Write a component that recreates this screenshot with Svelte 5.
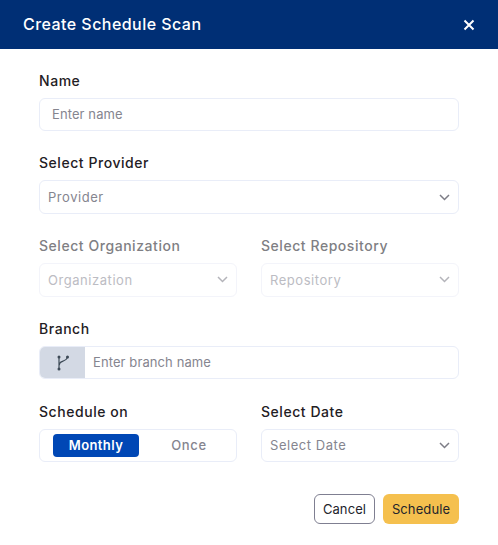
<script>
    let schedule = $state('Monthly');
</script>

<div class="modal">
    <header>
        <h1>Create Schedule Scan</h1>
        <svg class="close" width="12" height="12" viewBox="0 0 12 12"><path d="M1.5 1.5l9 9M10.5 1.5l-9 9" /></svg>
    </header>
    <main>
        <div class="field">
            <span class="label">Name</span>
            <div class="box input-box"><span class="ph">Enter name</span></div>
        </div>
        <div class="field">
            <span class="label">Select Provider</span>
            <div class="box select"><span class="ph">Provider</span>{@render chevron()}</div>
        </div>
        <div class="two disabled">
            <div class="field">
                <span class="label">Select Organization</span>
                <div class="box select"><span class="ph">Organization</span>{@render chevron()}</div>
            </div>
            <div class="field">
                <span class="label">Select Repository</span>
                <div class="box select"><span class="ph">Repository</span>{@render chevron()}</div>
            </div>
        </div>
        <div class="field">
            <span class="label">Branch</span>
            <div class="box branch">
                <div class="addon">
                    <svg width="12" height="16" viewBox="0 0 12 16">
                        <circle cx="2" cy="2" r="1.500" />
                        <circle cx="2" cy="14" r="1.500" />
                        <circle cx="10.500" cy="2" r="1.500" />
                        <path d="M2 2v12M2 10.500l1-2.500c.5-.8 1.200-1.100 2.500-1.600 2.500-1 4.500-1.800 5-4.400" />
                    </svg>
                </div>
                <span class="ph">Enter branch name</span>
            </div>
        </div>
        <div class="two">
            <div class="field">
                <span class="label">Schedule on</span>
                <div class="box toggle">
                    {#each ['Monthly', 'Once'] as opt}
                        <button class:on={schedule === opt} onclick={() => schedule = opt}>{opt}</button>
                    {/each}
                </div>
            </div>
            <div class="field">
                <span class="label">Select Date</span>
                <div class="box select"><span class="ph">Select Date</span>{@render chevron()}</div>
            </div>
        </div>
        <footer>
            <button class="cancel">Cancel</button>
            <button class="submit">Schedule</button>
        </footer>
    </main>
</div>

{#snippet chevron()}
    <svg class="chev" width="11" height="7" viewBox="0 0 11 7"><path d="M1 1l4.500 4.500 4.500-4.500" /></svg>
{/snippet}

<style>
    :global(body) {
        margin: 0;
        background: #fff;
        font-family: Inter, "Liberation Sans", sans-serif;
    }
    .modal {
        width: 498px;
        height: 545px;
        background: #fff;
        overflow: hidden;
    }
    header {
        height: 49px;
        background: #002f75;
        display: flex;
        align-items: center;
        justify-content: space-between;
        padding: 0 23px;
        box-sizing: border-box;
    }
    h1 {
        margin: -1px 0 0;
        font-size: 16px;
        font-weight: 500;
        letter-spacing: 0.45px;
        color: #fff;
    }
    .close path {
        stroke: #fff;
        stroke-width: 2;
        fill: none;
    }
    main {
        padding: 22.700px 39px 0;
        display: flex;
        flex-direction: column;
        gap: 23.250px;
    }
    .field {
        display: flex;
        flex-direction: column;
        gap: 8px;
        min-width: 0;
    }
    .label {
        font-size: 14px;
        line-height: 18px;
        font-weight: 500;
        letter-spacing: 0.55px;
        color: #1f2024;
    }
    .box {
        height: 33.500px;
        box-sizing: border-box;
        border: 1px solid #e9edf8;
        border-radius: 6px;
        display: flex;
        align-items: center;
        background: #fff;
    }
    .ph {
        font-size: 13px;
        line-height: 16px;
        margin-top: -1px;
        letter-spacing: 0.1px;
        color: #85858f;
    }
    .input-box {
        padding-left: 12px;
    }
    .select {
        padding: 0 7px 0 8px;
        justify-content: space-between;
    }
    .select .ph {
        letter-spacing: 0.55px;
    }
    .chev {
        margin-right: 1px;
    }
    .chev path {
        stroke: #7d7d86;
        stroke-width: 1.500;
        fill: none;
    }
    .two {
        display: grid;
        grid-template-columns: 198px 198px;
        gap: 24px;
    }
    .disabled .label {
        color: #7f7f84;
    }
    .disabled .box {
        border-color: #f3f4fa;
    }
    .disabled .ph {
        margin-top: 0;
        color: #bcbcc3;
    }
    .disabled .chev path {
        stroke: #b4b4ba;
    }
    .branch {
        overflow: hidden;
    }
    .addon {
        width: 45px;
        height: 100%;
        background: #d3d9e4;
        display: flex;
        align-items: center;
        justify-content: center;
        margin-right: 8px;
    }
    .addon circle {
        fill: #3d4a57;
    }
    .addon path {
        stroke: #3d4a57;
        stroke-width: 1.200;
        fill: none;
    }
    .toggle {
        padding: 0 0 0 13px;
    }
    .toggle button {
        flex: 1;
        height: 23px;
        border: 0;
        border-radius: 4px;
        background: none;
        font: 500 13px Inter, "Liberation Sans", sans-serif;
        letter-spacing: 0.65px;
        color: #85858f;
        padding: 0 0 0 3px;
    }
    .toggle button.on {
        flex: 0 0 86px;
        background: #0047b5;
        color: #fff;
        font-weight: 600;
        letter-spacing: 0.4px;
        padding: 0;
    }
    footer {
        display: flex;
        justify-content: flex-end;
        gap: 8px;
        margin-top: 8.500px;
    }
    footer button {
        height: 30px;
        border-radius: 6px;
        font: 400 13px Inter, "Liberation Sans", sans-serif;
        letter-spacing: 0.1px;
        color: #23242c;
        padding: 0;
    }
    .cancel {
        width: 61px;
        background: #fff;
        border: 1px solid #7f7f91;
    }
    .submit {
        width: 76px;
        background: #f5c04e;
        border: 0;
    }
</style>
